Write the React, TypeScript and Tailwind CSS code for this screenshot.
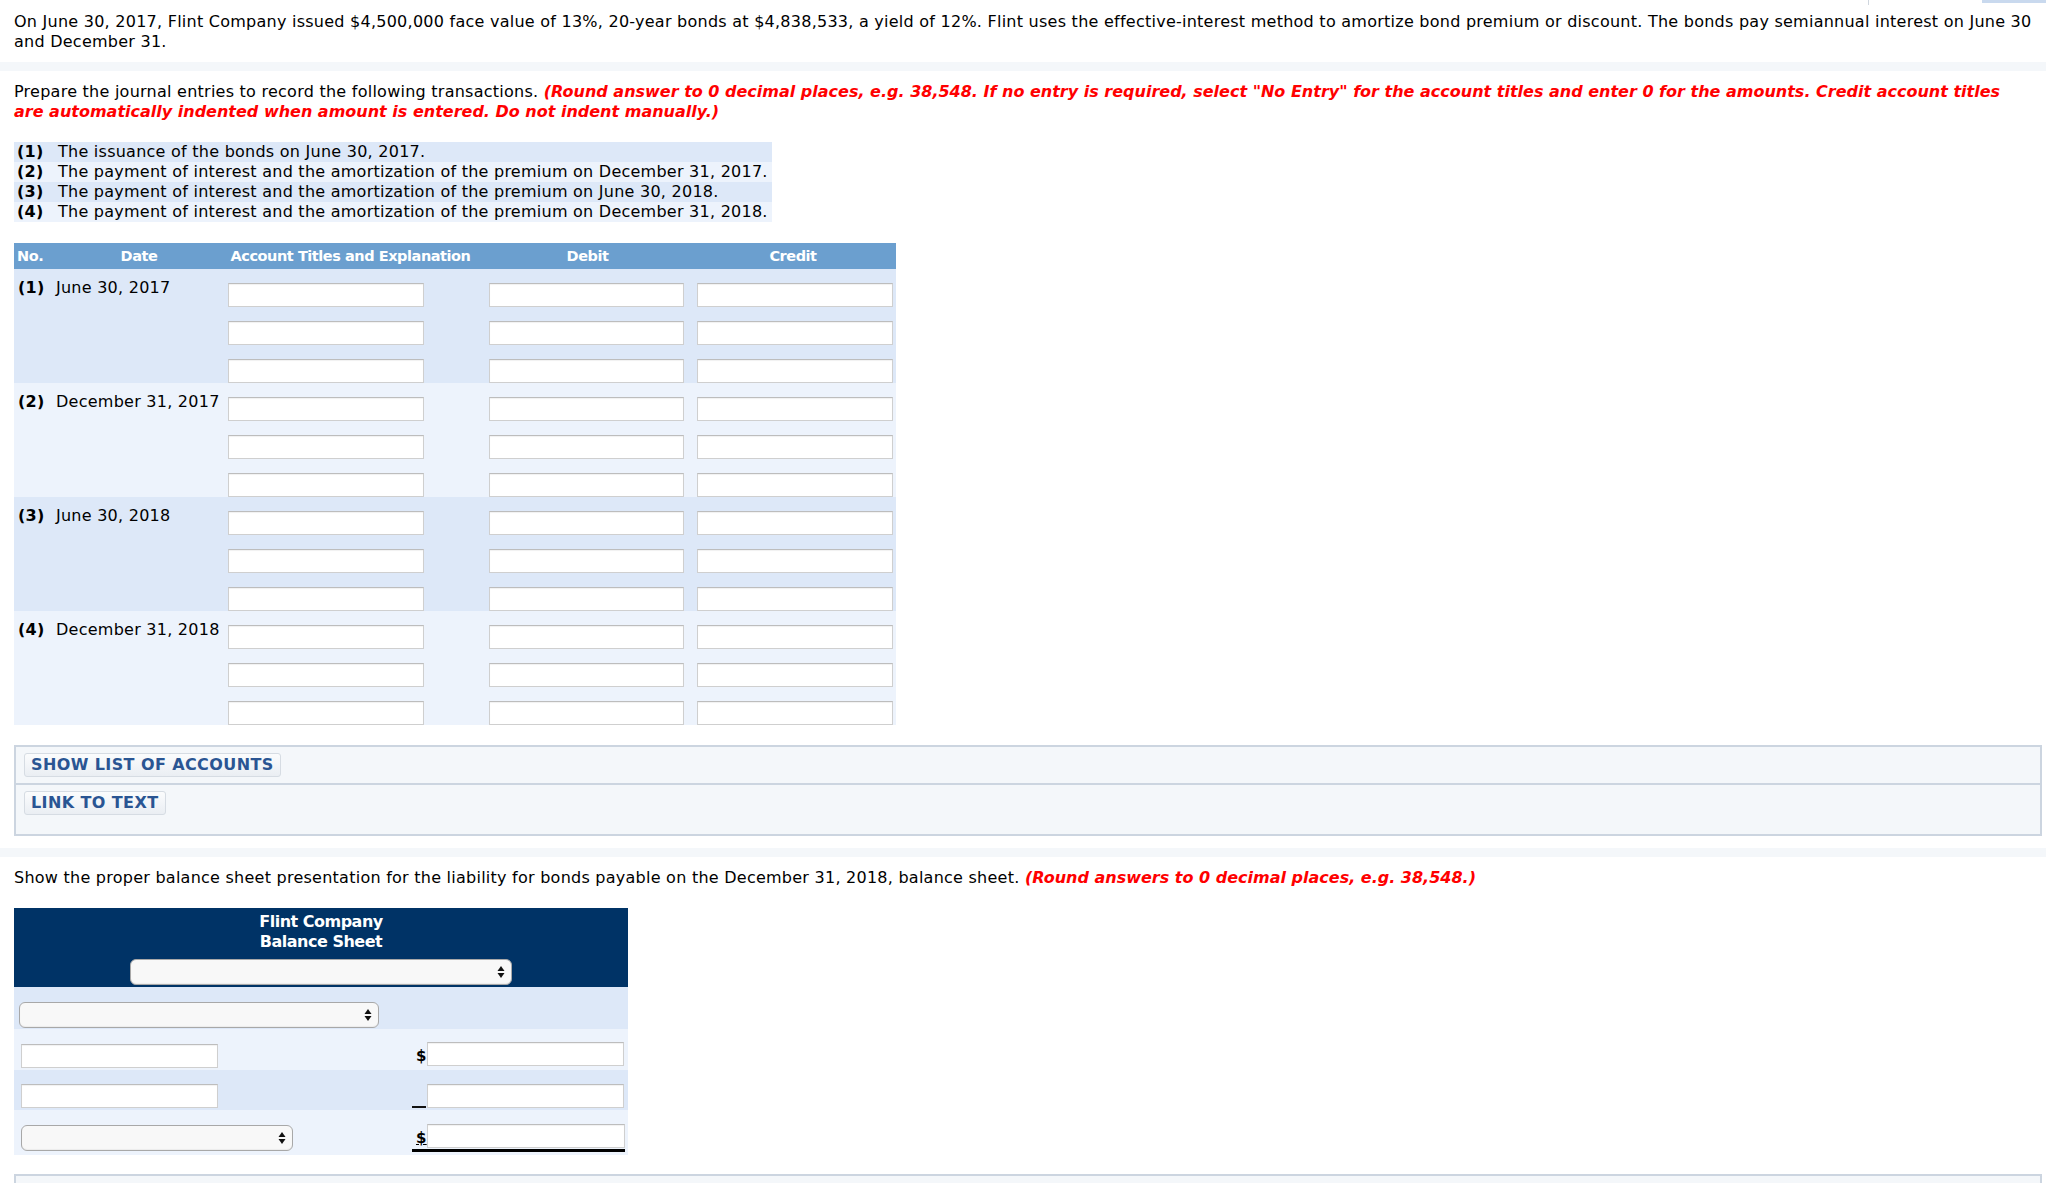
const font = "font-['DejaVu_Sans',Verdana,sans-serif]";

const transactions = [
  "The issuance of the bonds on June 30, 2017.",
  "The payment of interest and the amortization of the premium on December 31, 2017.",
  "The payment of interest and the amortization of the premium on June 30, 2018.",
  "The payment of interest and the amortization of the premium on December 31, 2018.",
];

const entries = [
  { no: "(1)", date: "June 30, 2017" },
  { no: "(2)", date: "December 31, 2017" },
  { no: "(3)", date: "June 30, 2018" },
  { no: "(4)", date: "December 31, 2018" },
];

function TextBox({ className = "" }: { className?: string }) {
  return (
    <div
      className={`h-[24px] bg-white border border-[#cfcfcf] border-t-[#bdbdbd] shadow-[inset_0_1px_1px_rgba(0,0,0,0.06)] ${className}`}
    />
  );
}

function SelectBox({ className = "" }: { className?: string }) {
  return (
    <div
      className={`h-[26px] flex items-center justify-end pr-[6px] bg-[#f8f8f8] border border-[#a8a8a8] rounded-[6px] shadow-[inset_0_-1px_1px_rgba(0,0,0,0.05)] ${className}`}
    >
      <svg width="8" height="14" viewBox="0 0 8 14">
        <path d="M4 1 L7.5 6 H0.5 Z" fill="#111" />
        <path d="M4 13 L7.5 8 H0.5 Z" fill="#111" />
      </svg>
    </div>
  );
}

function LinkButton({ label }: { label: string }) {
  return (
    <span className="inline-flex h-[24px] items-center px-[6px] rounded-[3px] border border-[#d6dce3] bg-gradient-to-b from-[#fbfcfd] to-[#eaeef3] text-[16px] font-bold text-[#2a5593] tracking-[0.4px]">
      {label}
    </span>
  );
}

function Band() {
  return <div className="h-[9px] bg-[#f4f7fa]" />;
}

export default function App() {
  return (
    <div className={`relative min-h-screen bg-white text-black text-[16px] leading-[20px] tracking-[0.25px] ${font}`}>
      <div className="absolute top-0 left-[1868px] w-px h-[5px] bg-[#cfd6de]" />
      <div className="absolute top-0 left-[1982px] w-[64px] h-[3px] bg-[#c9d9ee]" />

      {/* problem statement */}
      <section className="pl-[14px] pr-[4px] pt-[12px] pb-[10px]">
        <p>
          On June 30, 2017, Flint Company issued $4,500,000 face value of 13%, 20-year bonds at $4,838,533, a yield of
          12%. Flint uses the effective-interest method to amortize bond premium or discount. The bonds pay semiannual
          interest on June 30 and December 31.
        </p>
      </section>

      <Band />

      {/* journal entries */}
      <section className="pl-[14px] pr-[4px] pt-[11px] pb-[12px]">
        <p className="pr-[24px]">
          Prepare the journal entries to record the following transactions.{" "}
          <span className="text-[#ff0000] font-bold italic tracking-[0px]">
            (Round answer to 0 decimal places, e.g. 38,548. If no entry is required, select "No Entry" for the account
            titles and enter 0 for the amounts. Credit account titles are automatically indented when amount is
            entered. Do not indent manually.)
          </span>
        </p>

        <div className="mt-[20px] w-fit">
          {transactions.map((t, i) => (
            <div key={i} className={`flex h-[20px] items-center pl-[3px] pr-[4px] ${i % 2 === 0 ? "bg-[#dde8f8]" : "bg-[#edf3fc]"}`}>
              <span className="w-[41px] font-bold">({i + 1})</span>
              <span>{t}</span>
            </div>
          ))}
        </div>

        <div className="mt-[21px] w-[882px]">
          <div className="grid grid-cols-[40px_170px_265px_201px_206px] h-[26px] items-center bg-[#6b9fcf] text-white font-bold text-[14.5px] tracking-[-0.45px] whitespace-nowrap">
            <span className="pl-[3px]">No.</span>
            <span className="text-center">Date</span>
            <span className="text-center pr-[12px]">Account Titles and Explanation</span>
            <span className="text-center pr-[4px]">Debit</span>
            <span className="text-center">Credit</span>
          </div>

          {entries.map((e, i) => (
            <div key={e.no} className={`grid grid-cols-[210px_1fr] ${i % 2 === 0 ? "bg-[#dde8f8]" : "bg-[#edf3fc]"}`}>
              <div className="flex pl-[4px] pt-[9px] whitespace-nowrap">
                <span className="w-[38px] font-bold">{e.no}</span>
                <span>{e.date}</span>
              </div>
              <div>
                {[0, 1, 2].map((r) => (
                  <div key={r} className="grid grid-cols-[265px_201px_206px] h-[38px] pt-[14px]">
                    <div className="pl-[4px]">
                      <TextBox className="w-[196px]" />
                    </div>
                    <div>
                      <TextBox className="w-[195px]" />
                    </div>
                    <div className="pl-[7px]">
                      <TextBox className="w-[196px]" />
                    </div>
                  </div>
                ))}
              </div>
            </div>
          ))}
        </div>

        <div className="mt-[20px] border-2 border-[#ccd5e0] bg-[#f4f7fa]">
          <div className="h-[38px] pt-[6px] pl-[8px] border-b-2 border-[#ccd5e0]">
            <LinkButton label="SHOW LIST OF ACCOUNTS" />
          </div>
          <div className="h-[49px] pt-[6px] pl-[8px]">
            <LinkButton label="LINK TO TEXT" />
          </div>
        </div>
      </section>

      <Band />

      {/* balance sheet */}
      <section className="pl-[14px] pr-[4px] pt-[11px]">
        <p>
          Show the proper balance sheet presentation for the liability for bonds payable on the December 31, 2018,
          balance sheet.{" "}
          <span className="text-[#ff0000] font-bold italic tracking-[0px]">(Round answers to 0 decimal places, e.g. 38,548.)</span>
        </p>

        <div className="mt-[20px] w-[614px]">
          <div className="h-[79px] bg-[#003366] flex flex-col items-center pt-[4px]">
            <div className="text-white font-bold text-[16px] leading-[20px] tracking-[-0.5px] text-center">
              <div>Flint Company</div>
              <div>Balance Sheet</div>
            </div>
            <SelectBox className="mt-[7px] w-[382px]" />
          </div>

          <div className="h-[42px] bg-[#dde8f8] pt-[15px] pl-[5px]">
            <SelectBox className="w-[360px]" />
          </div>

          <div className="h-[41px] bg-[#edf3fc] flex items-start justify-between pl-[7px] pr-[4px]">
            <TextBox className="w-[197px] mt-[15px]" />
            <div className="flex items-end mt-[13px]">
              <span className="w-[15px] text-[15px] font-bold leading-[20px] pl-[4px]">$</span>
              <TextBox className="w-[197px]" />
            </div>
          </div>

          <div className="h-[40px] bg-[#dde8f8] flex items-start justify-between pl-[7px] pr-[4px]">
            <TextBox className="w-[197px] mt-[14px]" />
            <div className="flex items-end mt-[14px]">
              <span className="w-[14px] h-[22px] mr-px border-b-2 border-[#111]" />
              <TextBox className="w-[197px]" />
            </div>
          </div>

          <div className="h-[45px] bg-[#edf3fc] flex items-start justify-between pl-[7px] pr-[3px]">
            <SelectBox className="w-[272px] mt-[15px]" />
            <div className="flex items-end mt-[14px] border-b-[3px] border-black pb-[1px]">
              <span className="w-[15px] text-[15px] font-bold leading-[20px] pl-[4px] underline">$</span>
              <TextBox className="w-[198px]" />
            </div>
          </div>
        </div>

        <div className="mt-[19px] h-[60px] border-2 border-[#ccd5e0] bg-[#f4f7fa]" />
      </section>
    </div>
  );
}
